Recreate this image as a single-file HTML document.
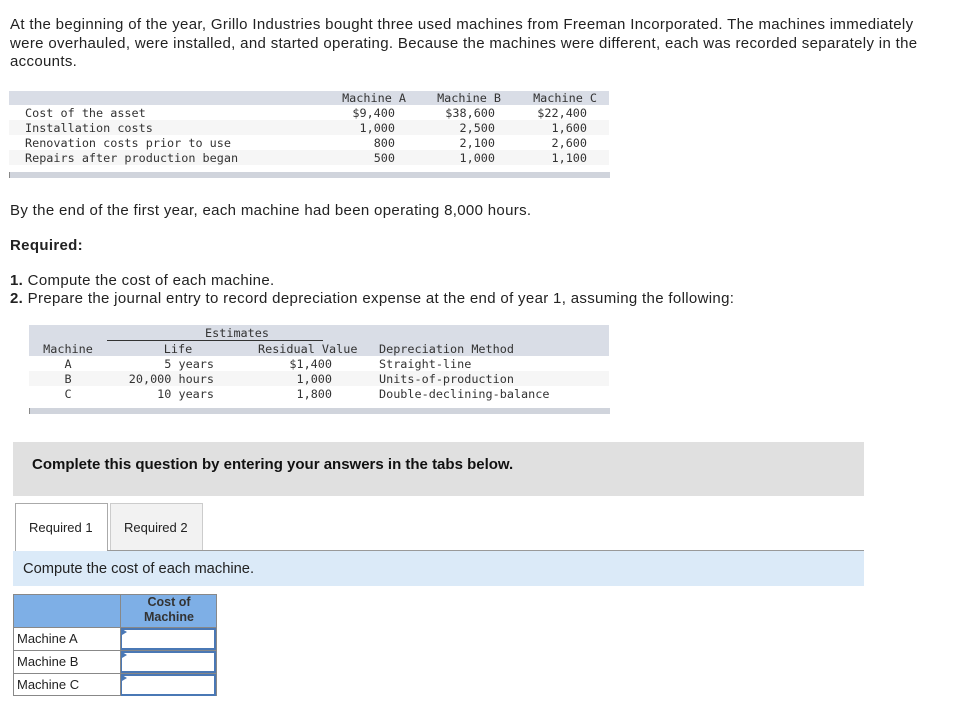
<!DOCTYPE html>
<html><head><meta charset="utf-8"><style>
body{margin:0;width:962px;height:705px;background:#fff;position:relative;font-family:"Liberation Sans",Arial,sans-serif;color:#222;overflow:hidden}
.a{position:absolute;white-space:nowrap}
.p{font-size:15px;line-height:18.5px;letter-spacing:0.33px}
.m{font-family:"DejaVu Sans Mono","Liberation Mono",monospace;font-size:11.8px;color:#333}
.r{text-align:right}
.c{text-align:center}
</style></head><body>
<div class="a p" style="left:10px;top:16px;white-space:normal;width:925px">At the beginning of the year, Grillo Industries bought three used machines from Freeman Incorporated. The machines immediately were overhauled, were installed, and started operating. Because the machines were different, each was recorded separately in the accounts.</div>

<div class="a" style="left:9px;top:91px;width:600px;height:14px;background:#d9dde6"></div>
<div class="a" style="left:9px;top:120px;width:600px;height:15px;background:#f6f6f6"></div>
<div class="a" style="left:9px;top:150px;width:600px;height:15px;background:#f6f6f6"></div>
<div class="a" style="left:9px;top:172px;width:600px;height:6px;background:#d0d4dc;border-left:1px solid #888"></div>
<div class="a m" style="left:300px;top:91px;width:106px;text-align:right">Machine A</div>
<div class="a m" style="left:400px;top:91px;width:101px;text-align:right">Machine B</div>
<div class="a m" style="left:500px;top:91px;width:97px;text-align:right">Machine C</div>
<div class="a m" style="left:25px;top:106px;line-height:15px">Cost of the asset<br>Installation costs<br>Renovation costs prior to use<br>Repairs after production began</div>
<div class="a m r" style="left:300px;top:106px;width:95px;line-height:15px">$9,400<br>1,000<br>800<br>500</div>
<div class="a m r" style="left:400px;top:106px;width:95px;line-height:15px">$38,600<br>2,500<br>2,100<br>1,000</div>
<div class="a m r" style="left:490px;top:106px;width:97px;line-height:15px">$22,400<br>1,600<br>2,600<br>1,100</div>

<div class="a p" style="left:10px;top:202px">By the end of the first year, each machine had been operating 8,000 hours.</div>
<div class="a p" style="left:10px;top:237px;font-weight:bold">Required:</div>
<div class="a p" style="left:10px;top:272px"><b>1.</b> Compute the cost of each machine.</div>
<div class="a p" style="left:10px;top:290px"><b>2.</b> Prepare the journal entry to record depreciation expense at the end of year 1, assuming the following:</div>

<div class="a" style="left:29px;top:325px;width:580px;height:31px;background:#d9dde6"></div>
<div class="a" style="left:29px;top:371px;width:580px;height:15px;background:#f6f6f6"></div>
<div class="a" style="left:29px;top:408px;width:580px;height:6px;background:#d0d4dc;border-left:1px solid #888"></div>
<div class="a" style="left:107px;top:340px;width:216px;height:1px;background:#333"></div>
<div class="a m c" style="left:129px;top:326px;width:216px">Estimates</div>
<div class="a m c" style="left:38px;top:342px;width:60px;line-height:15px">Machine<br>A<br>B<br>C</div>
<div class="a m c" style="left:150px;top:342px;width:56px">Life</div>
<div class="a m r" style="left:100px;top:357px;width:114px;line-height:15px">5 years<br>20,000 hours<br>10 years</div>
<div class="a m" style="left:258px;top:342px">Residual Value</div>
<div class="a m r" style="left:250px;top:357px;width:82px;line-height:15px">$1,400<br>1,000<br>1,800</div>
<div class="a m" style="left:379px;top:342px;line-height:15px">Depreciation Method<br>Straight-line<br>Units-of-production<br>Double-declining-balance</div>

<div class="a" style="left:13px;top:442px;width:851px;height:54px;background:#e0e0e0"></div>
<div class="a" style="left:32px;top:456px;font-size:15px;font-weight:bold;color:#111">Complete this question by entering your answers in the tabs below.</div>

<div class="a" style="left:15px;top:503px;width:91px;height:48px;border:1px solid #aaa;border-bottom:none;background:#fff"></div>
<div class="a" style="left:110px;top:503px;width:91px;height:47px;border:1px solid #ccc;border-bottom:none;background:#f2f2f2"></div>
<div class="a" style="left:29px;top:520px;font-size:13px;color:#222">Required 1</div>
<div class="a" style="left:124px;top:520px;font-size:13px;color:#222">Required 2</div>
<div class="a" style="left:107px;top:550px;width:757px;height:1px;background:#999"></div>
<div class="a" style="left:13px;top:551px;width:851px;height:35px;background:#dbeaf8"></div>
<div class="a" style="left:23px;top:561px;font-size:14.7px;color:#222">Compute the cost of each machine.</div>

<div class="a" style="left:13px;top:594px;width:204px;height:102px;border:1px solid #888;box-sizing:border-box;background:#fff"></div>
<div class="a" style="left:14px;top:595px;width:202px;height:32px;background:#7eafe6"></div>
<div class="a" style="left:120px;top:594px;width:1px;height:102px;background:#888"></div>
<div class="a" style="left:13px;top:650px;width:204px;height:1px;background:#888"></div>
<div class="a" style="left:13px;top:673px;width:204px;height:1px;background:#888"></div>
<div class="a" style="left:13px;top:627px;width:204px;height:1px;background:#888"></div>
<div class="a c" style="left:121px;top:595px;width:96px;font-size:12.5px;font-weight:bold;line-height:15px;color:#333">Cost of<br>Machine</div>
<div class="a" style="left:17px;top:631px;font-size:13px">Machine A</div>
<div class="a" style="left:17px;top:654px;font-size:13px">Machine B</div>
<div class="a" style="left:17px;top:677px;font-size:13px">Machine C</div>
<div class="a" style="left:121px;top:628px;width:92px;height:18px;border:2px solid #4a78b5;border-left-width:1px"></div>
<div class="a" style="left:121px;top:651px;width:92px;height:18px;border:2px solid #4a78b5;border-left-width:1px"></div>
<div class="a" style="left:121px;top:674px;width:92px;height:18px;border:2px solid #4a78b5;border-left-width:1px"></div>
<div class="a" style="left:122px;top:629px;width:0;height:0;border-top:3px solid transparent;border-bottom:3px solid transparent;border-left:5px solid #4a78b5"></div>
<div class="a" style="left:122px;top:652px;width:0;height:0;border-top:3px solid transparent;border-bottom:3px solid transparent;border-left:5px solid #4a78b5"></div>
<div class="a" style="left:122px;top:675px;width:0;height:0;border-top:3px solid transparent;border-bottom:3px solid transparent;border-left:5px solid #4a78b5"></div>
</body></html>
